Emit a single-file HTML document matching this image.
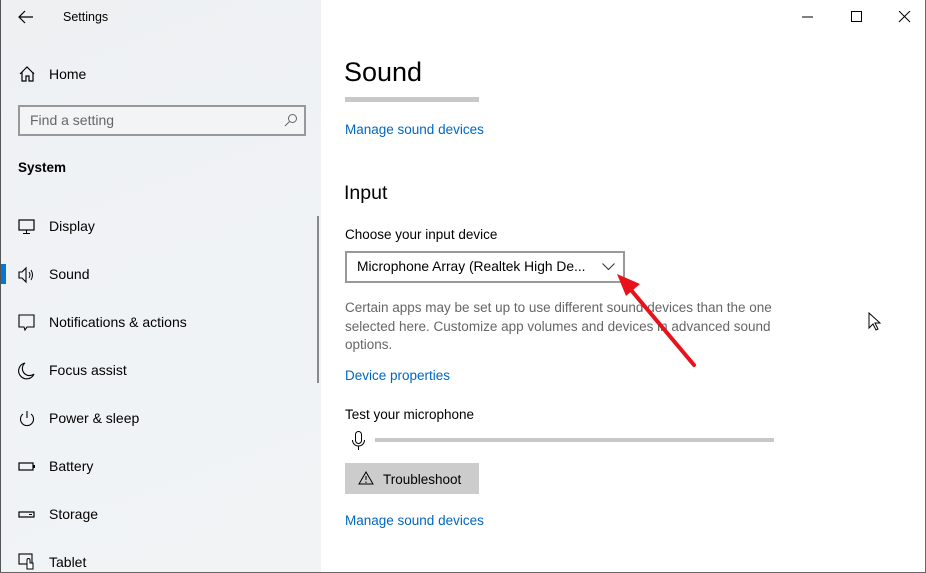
<!DOCTYPE html>
<html><head><meta charset="utf-8"><style>
*{margin:0;padding:0;box-sizing:border-box}
body{width:926px;height:573px;overflow:hidden;font-family:"Liberation Sans",sans-serif;background:#fff;position:relative;color:#000}
.side{position:absolute;left:0;top:0;width:321px;height:573px;background:linear-gradient(160deg,#eef0f2,#f0f3f6 50%,#f1f3f5);border-left:1px solid #555}
.t{position:absolute;font-size:14px;white-space:nowrap}
.side .t{font-size:14px}
.ic{position:absolute;left:17px;width:18px;height:18px}
.main .t{font-size:13.5px}
a{color:#0067c0;text-decoration:none}
</style></head><body>
<div class="side">
<svg style="position:absolute;left:17px;top:10px" width="16" height="14" viewBox="0 0 16 14"><path d="M7 1L1 7l6 6M1 7h14" stroke="#000" fill="none" stroke-width="1.2"/></svg>
<div class="t" style="left:62px;top:10px;font-size:12.5px">Settings</div>
<svg class="ic" style="top:65px" viewBox="0 0 18 18"><path d="M2 9L9 2l7 7M4 7v9h4v-5h3v5h4V7" stroke="#000" fill="none" stroke-width="1.2"/></svg>
<div class="t" style="left:48px;top:66px">Home</div>
<div style="position:absolute;left:17px;top:105px;width:288px;height:31px;border:2px solid #999;background:#f3f4f6"></div>
<div class="t" style="left:29px;top:112px;color:#666">Find a setting</div>
<svg style="position:absolute;left:283px;top:113px" width="14" height="14" viewBox="0 0 14 14"><circle cx="8.5" cy="5.5" r="4" stroke="#666" fill="none"/><path d="M5.5 8.5L1 13" stroke="#666"/></svg>
<div class="t" style="left:17px;top:160px;font-weight:bold;font-size:13.5px">System</div>
<div style="position:absolute;left:316px;top:216px;width:2px;height:167px;background:#8a8a8a"></div>
<div style="position:absolute;left:0;top:264px;width:5px;height:20px;background:#0078d7"></div>
<svg class="ic" style="top:218px" viewBox="0 0 18 18"><rect x="1" y="2" width="15" height="10" stroke="#000" fill="none" stroke-width="1.2"/><path d="M8.5 12v3M5 15.5h7" stroke="#000"/></svg>
<div class="t" style="left:48px;top:218px">Display</div>
<svg class="ic" style="top:266px" viewBox="0 0 18 18"><path d="M1 6h3l4-4v14l-4-4H1z" stroke="#000" fill="none" stroke-width="1.1"/><path d="M11 6q2 3 0 6M13 4q3 5 0 10" stroke="#000" fill="none"/></svg>
<div class="t" style="left:48px;top:266px">Sound</div>
<svg class="ic" style="top:314px" viewBox="0 0 18 18"><path d="M1 1h15v12H9l-2 3-1-3H1z" stroke="#000" fill="none" stroke-width="1.1"/></svg>
<div class="t" style="left:48px;top:314px">Notifications &amp; actions</div>
<svg class="ic" style="top:362px" viewBox="0 0 18 18"><path d="M7 1a8 8 0 1 0 9 11A7 7 0 0 1 7 1z" stroke="#000" fill="none" stroke-width="1.1"/></svg>
<div class="t" style="left:48px;top:362px">Focus assist</div>
<svg class="ic" style="top:410px" viewBox="0 0 18 18"><path d="M5 4a6.5 6.5 0 1 0 8 0M9 1v7" stroke="#000" fill="none" stroke-width="1.1"/></svg>
<div class="t" style="left:48px;top:410px">Power &amp; sleep</div>
<svg class="ic" style="top:458px" viewBox="0 0 18 18"><rect x="1" y="5" width="14" height="7" stroke="#000" fill="none" stroke-width="1.2"/><rect x="15" y="7" width="2" height="3"/></svg>
<div class="t" style="left:48px;top:458px">Battery</div>
<svg class="ic" style="top:506px" viewBox="0 0 18 18"><rect x="1" y="6" width="15" height="5" stroke="#000" fill="none" stroke-width="1.2"/><path d="M11 8.5h3" stroke="#000"/></svg>
<div class="t" style="left:48px;top:506px">Storage</div>
<svg class="ic" style="top:553px" viewBox="0 0 18 18"><rect x="1" y="1" width="13" height="10" stroke="#000" fill="none" stroke-width="1.1"/><path d="M9 16V7a1.5 1.5 0 0 1 3 0v3h3v6z" stroke="#000" fill="#fff"/></svg>
<div class="t" style="left:48px;top:554px">Tablet</div>
</div>
<div style="position:absolute;left:0;top:572px;width:926px;height:1px;background:#666"></div>
<div style="position:absolute;right:0;top:0;width:1px;height:573px;background:#666"></div>
<svg style="position:absolute;left:802px;top:11px" width="110" height="12"><path d="M0 6h11" stroke="#000"/><rect x="49.5" y="0.5" width="10" height="10" stroke="#000" fill="none"/><path d="M97 0l11 11M108 0L97 11" stroke="#000"/></svg>
<div class="main">
<div class="t" style="left:344px;top:57px;font-size:27px">Sound</div>
<div style="position:absolute;left:345px;top:97px;width:134px;height:5px;background:#c8c8c8"></div>
<a class="t" style="left:345px;top:122px">Manage sound devices</a>
<div class="t" style="left:344px;top:182px;font-size:19.5px">Input</div>
<div class="t" style="left:345px;top:227px">Choose your input device</div>
<div style="position:absolute;left:345px;top:251px;width:280px;height:32px;border:2px solid #999"></div>
<div class="t" style="left:357px;top:259px;font-size:13.8px">Microphone Array (Realtek High De...</div>
<svg style="position:absolute;left:602px;top:263px" width="13" height="8"><path d="M0.5 0.5l6 6 6-6" stroke="#333" fill="none"/></svg>
<div class="t" style="left:345px;top:299px;color:#666;font-size:13.5px;line-height:18.5px;white-space:normal;width:460px">Certain apps may be set up to use different sound devices than the one selected here. Customize app volumes and devices in advanced sound options.</div>
<a class="t" style="left:345px;top:368px">Device properties</a>
<div class="t" style="left:345px;top:407px">Test your microphone</div>
<svg style="position:absolute;left:351px;top:431px" width="16" height="20" viewBox="0 0 16 20"><rect x="4.5" y="0.5" width="6" height="12" rx="3" stroke="#000" fill="none"/><path d="M1.5 9a6 6 0 0 0 12 0M7.5 15v4" stroke="#000" fill="none"/></svg>
<div style="position:absolute;left:375px;top:438px;width:399px;height:4px;background:#c8c8c8"></div>
<div style="position:absolute;left:345px;top:463px;width:134px;height:31px;background:#cccccc"></div>
<svg style="position:absolute;left:358px;top:471px" width="16" height="14"><path d="M8 1L15 13H1z" stroke="#000" fill="none"/><path d="M8 5v4M8 10.5v1.5" stroke="#000"/></svg>
<div class="t" style="left:383px;top:472px">Troubleshoot</div>
<a class="t" style="left:345px;top:513px">Manage sound devices</a>
</div>
<svg style="position:absolute;left:610px;top:270px" width="90" height="100"><path d="M84 95L16 14" stroke="#e8121a" stroke-width="4" stroke-linecap="round"/><path d="M7 4L30 14L16 26z" fill="#e8121a"/></svg>
<svg style="position:absolute;left:868px;top:312px" width="14" height="20"><path d="M1 1v15l4-4 3 6 2-1-3-6h5z" fill="#fff" stroke="#000"/></svg>
</body></html>
